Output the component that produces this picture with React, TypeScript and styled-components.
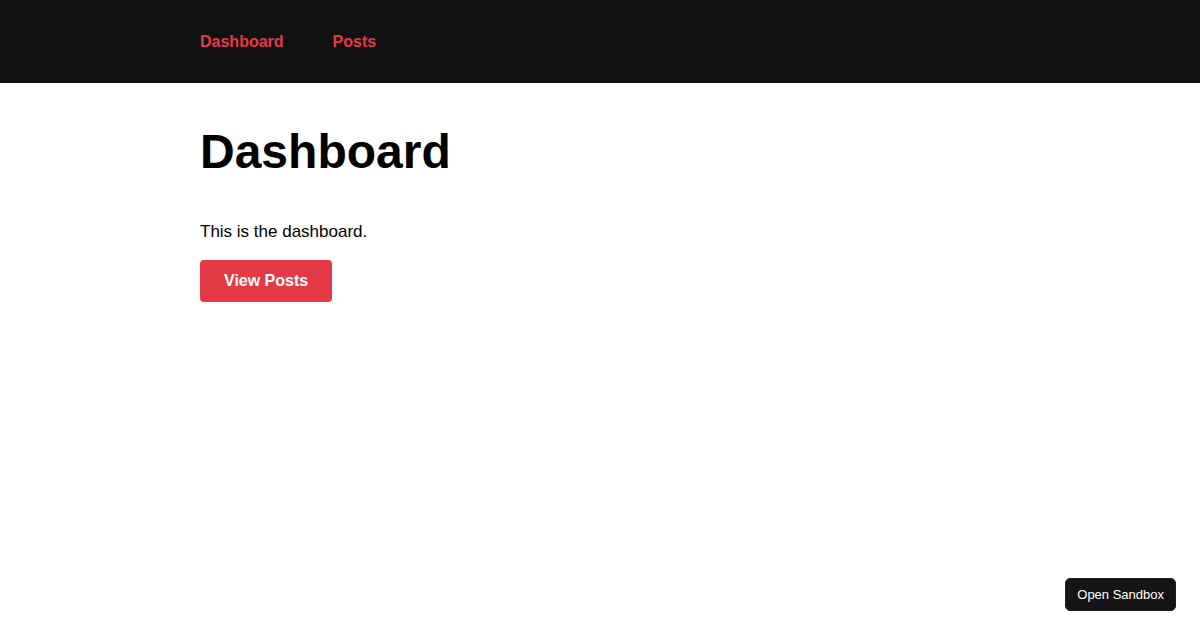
import React from "react";
import styled, { createGlobalStyle } from "styled-components";

const GlobalStyle = createGlobalStyle`
  html, body {
    margin: 0;
    padding: 0;
    background: #ffffff;
    color: #000000;
    font-family: "Liberation Sans", Arial, sans-serif;
    line-height: 1.5;
  }
  * { box-sizing: border-box; }
`;

const Header = styled.header`
  background: #111111;
  height: 83px;
  display: flex;
  align-items: center;
`;

const Container = styled.div`
  width: 800px;
  margin: 0 auto;
`;

const Nav = styled.nav`
  display: flex;
  align-items: center;
  gap: 49px;
`;

const NavLink = styled.a`
  color: #e63946;
  font-weight: 700;
  font-size: 16px;
  text-decoration: none;
  cursor: pointer;
`;

const Main = styled.main`
  width: 800px;
  margin: 0 auto;
`;

const Title = styled.h1`
  font-size: 48px;
  font-weight: 700;
  margin: 33px 0 31px;
`;

const Text = styled.p`
  font-size: 17px;
  margin: 31px 0 15px;
`;

const PrimaryButton = styled.button`
  font-family: "Liberation Sans", Arial, sans-serif;
  background: #e63946;
  color: #ffffff;
  border: none;
  border-radius: 4px;
  font-size: 16px;
  font-weight: 700;
  line-height: 18.5px;
  padding: 12px 24px;
  cursor: pointer;
`;

const SandboxButton = styled.button`
  position: fixed;
  right: 24px;
  bottom: 19px;
  font-family: "Liberation Sans", Arial, sans-serif;
  background: #151515;
  color: #ffffff;
  border: 1px solid #222222;
  border-radius: 5px;
  font-size: 13px;
  line-height: 15px;
  height: 33px;
  padding: 0 11px;
  cursor: pointer;
`;

export default function App() {
  return (
    <>
      <GlobalStyle />
      <Header>
        <Container>
          <Nav>
            <NavLink>Dashboard</NavLink>
            <NavLink>Posts</NavLink>
          </Nav>
        </Container>
      </Header>
      <Main>
        <Title>Dashboard</Title>
        <Text>This is the dashboard.</Text>
        <PrimaryButton>View Posts</PrimaryButton>
      </Main>
      <SandboxButton>Open Sandbox</SandboxButton>
    </>
  );
}
